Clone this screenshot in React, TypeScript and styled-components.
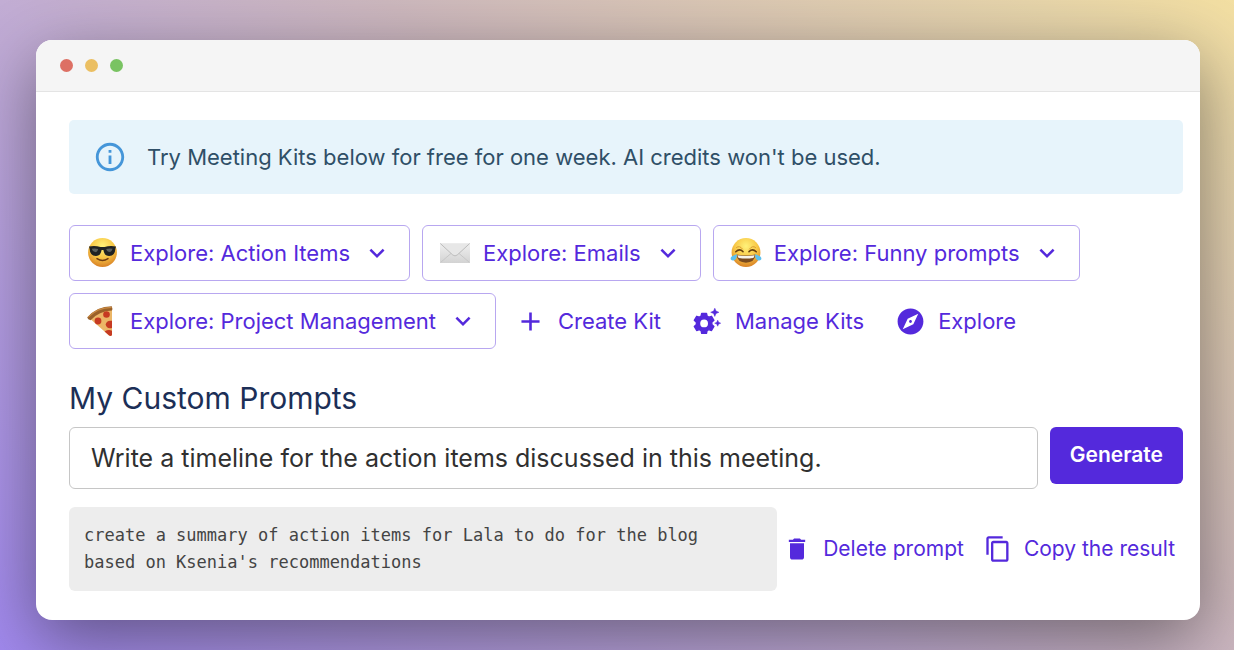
import React from "react";
import styled, { createGlobalStyle } from "styled-components";
import {
  MdAdd,
  MdContentCopy,
  MdDelete,
  MdExplore,
  MdInfoOutline,
  MdKeyboardArrowDown,
} from "react-icons/md";

const GlobalStyle = createGlobalStyle`
  *, *::before, *::after { box-sizing: border-box; }
  body { margin: 0; font-family: Inter, "Liberation Sans", sans-serif; }
  button, input { font-family: inherit; }
`;

const violet = "#5429dc";

const Backdrop = styled.div`
  min-height: 100vh;
  padding: 40px 34px 30px 36px;
  overflow: hidden;
  background: linear-gradient(36deg, #a189ee 0%, #c2add4 42%, #cdb8be 60%, #e7d5ab 90%, #f3dfa2 100%);
`;

const Window = styled.main`
  border-radius: 16px;
  background: #ffffff;
  box-shadow: 0 20px 68px rgba(0, 0, 0, 0.43);
`;

const TitleBar = styled.div`
  display: flex;
  align-items: center;
  gap: 12px;
  height: 52px;
  padding: 0 24px;
  border-bottom: 1px solid #e4e4e4;
  border-radius: 16px 16px 0 0;
  background: #f5f5f5;
`;

const Dot = styled.span<{ $color: string }>`
  width: 13px;
  height: 13px;
  border-radius: 50%;
  background: ${(p) => p.$color};
`;

const Content = styled.div`
  padding: 28px 17px 29px 33px;
`;

const Notice = styled.div`
  display: flex;
  align-items: center;
  gap: 20px;
  min-height: 74px;
  padding: 0 24px;
  border-radius: 5px;
  background: #e7f4fb;
  color: #2f4f67;
  font-size: 22px;
  line-height: 32px;

  svg {
    color: #4596d9;
    flex: none;
  }
`;

const Kits = styled.div`
  display: flex;
  flex-wrap: wrap;
  align-items: center;
  gap: 12px;
  margin-top: 31px;
`;

const BaseButton = styled.button`
  display: inline-flex;
  align-items: center;
  gap: 12px;
  border: 0;
  background: none;
  color: ${violet};
  font-size: 22px;
  line-height: 32px;
  font-weight: 400;
  white-space: nowrap;
  cursor: pointer;

  svg {
    flex: none;
  }
`;

const KitButton = styled(BaseButton)`
  height: 56px;
  padding: 0 17px 0 16px;
  border: 1px solid #b8a7f0;
  border-radius: 6px;
`;

const TextButton = styled(BaseButton)`
  height: 56px;
  padding: 0 12px 0 7px;
`;

const Heading = styled.h2`
  margin: 29px 0 9px;
  color: #1c2f57;
  font-size: 30px;
  line-height: 40px;
  font-weight: 400;
`;

const PromptForm = styled.form`
  display: flex;
  align-items: flex-start;
  gap: 12px;
`;

const PromptInput = styled.input`
  flex: 1;
  min-width: 0;
  height: 62px;
  padding: 0 21px;
  border: 1px solid #c6c6c6;
  border-radius: 6px;
  background: #ffffff;
  color: #303030;
  font-size: 25px;
`;

const GenerateButton = styled(BaseButton)`
  justify-content: center;
  height: 57px;
  padding: 0 20px 2px;
  border-radius: 6px;
  background: ${violet};
  color: #ffffff;
  font-size: 21px;
  font-weight: 600;
`;

const SavedPrompt = styled.div`
  display: flex;
  align-items: center;
  gap: 6px;
  margin-top: 18px;
`;

const PromptText = styled.code`
  flex: 1;
  min-width: 0;
  min-height: 84px;
  padding: 15px 40px 15px 15px;
  border-radius: 6px;
  background: #ededed;
  color: #444444;
  font-family: "DejaVu Sans Mono", "Liberation Mono", monospace;
  font-size: 17px;
  line-height: 27px;
`;

const Actions = styled.div`
  display: flex;
  gap: 12px;
`;

const ActionButton = styled(BaseButton)`
  height: 56px;
  padding: 0 8px 0 0;
  font-size: 21px;
`;

const CoolFace = () => (
  <svg width="32" height="32" viewBox="0 0 32 32" aria-hidden="true">
    <defs>
      <radialGradient id="coolSkin" cx="50%" cy="28%" r="72%">
        <stop offset="0" stopColor="#fff27a" />
        <stop offset="0.55" stopColor="#f8c745" />
        <stop offset="1" stopColor="#d98226" />
      </radialGradient>
    </defs>
    <circle cx="16.500" cy="15.500" r="14.400" fill="url(#coolSkin)" />
    <path d="M3 9.600q6-1.200 11.400.5h4.200Q24 8.400 30 9.600l-.6 2.200q-.5 7-6.200 7.300-4.800.2-5.800-6.200h-1.800q-1.200 6.400-5.800 6.200-5.700-.3-6.200-7.300z" fill="#1f2223" />
    <path d="M5.800 11.800q3.200-.8 6.400.2-.5 2.300-2.200 3.200-3.200-.2-4.200-3.400zM20.200 12q3.200-1 6.400-.2-.6 2.400-2.500 3.300-3.200-.1-3.900-3.100z" fill="#5b605d" />
    <path d="M11 21.600q5.500 3.600 11 0" fill="none" stroke="#6e3b10" strokeWidth="1.500" strokeLinecap="round" />
  </svg>
);

const Envelope = () => (
  <svg width="32" height="32" viewBox="0 0 32 32" aria-hidden="true">
    <defs>
      <linearGradient id="paper" x1="0" y1="0" x2="0" y2="1">
        <stop offset="0" stopColor="#f1f1f1" />
        <stop offset="1" stopColor="#d3d3d3" />
      </linearGradient>
    </defs>
    <rect x="1" y="6" width="30" height="20" rx="0.800" fill="url(#paper)" />
    <path d="M1.500 25.500l11-9.500M30.500 25.500l-11-9.500" stroke="#c4c4c4" strokeWidth="0.900" fill="none" />
    <path d="M1.300 6.500l12.500 11.500q2.200 1.800 4.400 0L30.700 6.500z" fill="#e7e7e7" />
    <path d="M1.300 6.500l12.500 11.500q2.200 1.800 4.400 0L30.700 6.500" fill="none" stroke="#bcbcbc" strokeWidth="1" />
  </svg>
);

const JoyFace = () => (
  <svg width="32" height="32" viewBox="0 0 32 32" aria-hidden="true">
    <defs>
      <radialGradient id="joySkin" cx="50%" cy="28%" r="72%">
        <stop offset="0" stopColor="#fff27a" />
        <stop offset="0.55" stopColor="#f8c745" />
        <stop offset="1" stopColor="#d98226" />
      </radialGradient>
    </defs>
    <circle cx="16" cy="15.500" r="14.400" fill="url(#joySkin)" />
    <path d="M6.500 10.500q3-2.500 6 1.500M25.500 10.500q-3-2.500-6 1.500" fill="none" stroke="#d99a2e" strokeWidth="1" strokeLinecap="round" />
    <path d="M5.800 14.800q3.600-3.600 7.200-.2M26.200 14.800q-3.600-3.600-7.200-.2" fill="none" stroke="#68400f" strokeWidth="1.600" strokeLinecap="round" />
    <path d="M6.500 17.500q9.500 1.800 19 0-.8 8-9.500 8.200-8.700-.2-9.500-8.200z" fill="#7a4a1e" />
    <path d="M7.400 18.200q8.600 1.600 17.200 0-.4 2-1.400 2.800-7.200 1-14.400 0-1-.8-1.400-2.800z" fill="#f6f3ea" />
    <path d="M6.800 17.200q.4 4.200-2.400 6-2.200.9-3.600-.8-.8-1.700.8-3 2.400-1.200 5.200-2.200zM25.200 17.200q-.4 4.200 2.400 6 2.200.9 3.600-.8.8-1.700-.8-3-2.400-1.200-5.200-2.200z" fill="#5cc0ee" />
  </svg>
);

const PizzaSlice = () => (
  <svg width="32" height="32" viewBox="0 0 32 32" aria-hidden="true">
    <path d="M3.500 13.200Q12 4 26 3.800V30q-1.200 2-3.200.3Z" fill="#ebb566" />
    <path d="M1.200 12.600Q10.500 1.200 25.800 1.200q1 2.400.2 4.400Q13 6.200 4.600 15.200 1.800 15 1.200 12.600z" fill="#9a6029" />
    <path d="M2.200 12.200Q11 2.400 25.600 2.300" fill="none" stroke="#c88a43" strokeWidth="1.200" />
    <circle cx="20.500" cy="9.500" r="3.300" fill="#c63a22" />
    <circle cx="12" cy="16" r="3.400" fill="#c63a22" />
    <path d="M26 15.800v7.200q-5.400 1.200-6.400-3.400 1-4.800 6.400-3.800zM26 25.800v4.200q-1.200 2-3.200.3l-4.200-3.800q4-2.400 7.400-.7z" fill="#c63a22" />
  </svg>
);

const GearSparkles = () => (
  <svg width="31" height="31" viewBox="0 0 31 31" fill="currentColor" aria-hidden="true">
    <path
      fillRule="evenodd"
      strokeWidth="1.400"
      stroke="currentColor"
      strokeLinejoin="round"
      d="M9.700 7.400h4.800l.6 2.800 1.700 1 2.700-.9 2.400 4-2.100 2v2.200l2.100 2-2.400 4-2.700-.9-1.700 1-.6 2.800H9.700l-.6-2.800-1.700-1-2.700.9-2.400-4 2.100-2v-2.200l-2.100-2 2.400-4 2.700.9 1.700-1zM12.100 12.800a4.600 4.600 0 1 0 0 9.200 4.600 4.600 0 1 0 0-9.200z"
    />
    <path d="M22.800 2.200l1.200 2.900 2.900 1.200-2.900 1.200-1.200 2.900-1.200-2.900-2.900-1.200 2.900-1.200zM25.700 14.200l.9 2.100 2.100.9-2.100.9-.9 2.100-.9-2.100-2.100-.9 2.100-.9z" stroke="currentColor" strokeWidth="0.500" />
  </svg>
);

const kits = [
  { label: "Explore: Action Items", icon: <CoolFace /> },
  { label: "Explore: Emails", icon: <Envelope /> },
  { label: "Explore: Funny prompts", icon: <JoyFace /> },
  { label: "Explore: Project Management", icon: <PizzaSlice /> },
];

export default function App() {
  return (
    <Backdrop>
      <GlobalStyle />
      <Window>
        <TitleBar>
          <Dot $color="#dd7064" />
          <Dot $color="#ebbf62" />
          <Dot $color="#79c362" />
        </TitleBar>
        <Content>
          <Notice role="status">
            <MdInfoOutline size={34} aria-hidden="true" />
            <span>Try Meeting Kits below for free for one week. AI credits won't be used.</span>
          </Notice>

          <Kits>
            {kits.map((kit) => (
              <KitButton key={kit.label} type="button" aria-haspopup="menu">
                {kit.icon}
                {kit.label}
                <MdKeyboardArrowDown size={30} aria-hidden="true" />
              </KitButton>
            ))}
            <TextButton type="button">
              <MdAdd size={31} aria-hidden="true" />
              Create Kit
            </TextButton>
            <TextButton type="button">
              <GearSparkles />
              Manage Kits
            </TextButton>
            <TextButton type="button">
              <MdExplore size={31} aria-hidden="true" />
              Explore
            </TextButton>
          </Kits>

          <Heading id="custom-prompts">My Custom Prompts</Heading>
          <PromptForm onSubmit={(e) => e.preventDefault()}>
            <PromptInput
              type="text"
              aria-labelledby="custom-prompts"
              defaultValue="Write a timeline for the action items discussed in this meeting."
            />
            <GenerateButton type="submit">Generate</GenerateButton>
          </PromptForm>

          <SavedPrompt>
            <PromptText>
              create a summary of action items for Lala to do for the blog based on Ksenia's
              recommendations
            </PromptText>
            <Actions>
              <ActionButton type="button">
                <MdDelete size={28} aria-hidden="true" />
                Delete prompt
              </ActionButton>
              <ActionButton type="button">
                <MdContentCopy size={28} aria-hidden="true" />
                Copy the result
              </ActionButton>
            </Actions>
          </SavedPrompt>
        </Content>
      </Window>
    </Backdrop>
  );
}
